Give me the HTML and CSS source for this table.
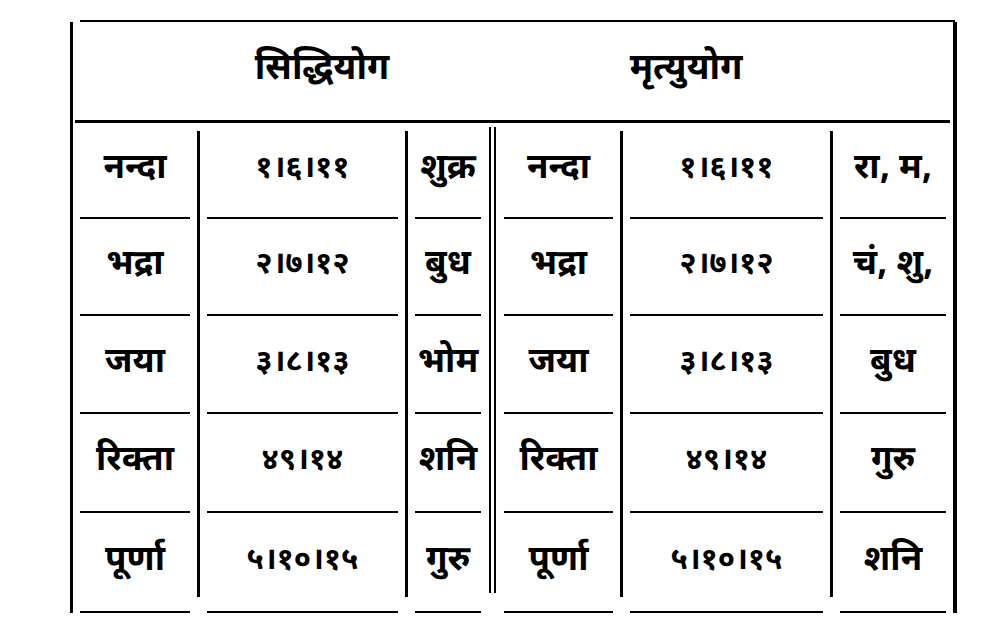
FILE: index.html
```html
<!DOCTYPE html>
<html lang="hi">
<head>
<meta charset="utf-8">
<link rel="stylesheet" href="styles.css">
</head>
<body>
<div class="page">
  <div class="top-rule"></div>
  <div class="frame">
    <div class="head">
      <div class="head-cell">सिद्धियोग</div>
      <div class="head-cell">मृत्युयोग</div>
    </div>
    <div class="grid">
      <div class="vline c2"></div>
      <div class="vline c4"></div>
      <div class="dline c6"></div>
      <div class="vline c8"></div>
      <div class="vline c10"></div>

      <div class="cell">नन्दा</div><div class="cell num">१।६।११</div><div class="cell">शुक्र</div>
      <div class="cell">नन्दा</div><div class="cell num">१।६।११</div><div class="cell">रा, म,</div>

      <div class="cell">भद्रा</div><div class="cell num">२।७।१२</div><div class="cell">बुध</div>
      <div class="cell">भद्रा</div><div class="cell num">२।७।१२</div><div class="cell">चं, शु,</div>

      <div class="cell">जया</div><div class="cell num">३।८।१३</div><div class="cell">भोम</div>
      <div class="cell">जया</div><div class="cell num">३।८।१३</div><div class="cell">बुध</div>

      <div class="cell">रिक्ता</div><div class="cell num">४९।१४</div><div class="cell">शनि</div>
      <div class="cell">रिक्ता</div><div class="cell num">४९।१४</div><div class="cell">गुरु</div>

      <div class="cell">पूर्णा</div><div class="cell num">५।१०।१५</div><div class="cell">गुरु</div>
      <div class="cell">पूर्णा</div><div class="cell num">५।१०।१५</div><div class="cell">शनि</div>
    </div>
  </div>
</div>
</body>
</html>
```
FILE: styles.css
```css
html, body {
  margin: 0;
  padding: 0;
  background: #fff;
}
body {
  width: 1000px;
  height: 636px;
  overflow: hidden;
  font-family: "Noto Sans Devanagari", "Lohit Devanagari", "Noto Sans", sans-serif;
  color: #000;
}
.page {
  padding-top: 20px;
  padding-left: 70px;
}
.top-rule {
  margin-left: 10px;
  width: 875px;
  height: 2px;
  background: #000;
}
.frame {
  width: 880px;
  border-left: 3px solid #000;
  border-right: 4px solid #000;
}
.head {
  height: 98px;
  display: grid;
  grid-template-columns: 498px 230px 1fr;
  align-items: center;
  background: linear-gradient(#000, #000) 2px 100% / 875px 3px no-repeat;
  padding-bottom: 3px;
}
.head-cell {
  text-align: center;
  font-size: 36px;
  font-weight: 700;
  line-height: 1;
}
.grid {
  display: grid;
  grid-template-columns: 124px 3px 205px 3px 80px 9px 123px 3px 207px 3px 1fr;
  grid-template-rows: 96px 97px 98px 99px 100px;
}
.vline {
  grid-row: 1 / span 5;
  background: #000;
  margin: 8px 0 16px;
}
.dline {
  grid-row: 1 / span 5;
  border-left: 2px solid #000;
  border-right: 2px solid #000;
  margin: 4px 1px 20px;
}
.c2 { grid-column: 2; }
.c4 { grid-column: 4; }
.c6 { grid-column: 6; }
.c8 { grid-column: 8; }
.c10 { grid-column: 10; }
.cell {
  display: flex;
  align-items: center;
  justify-content: center;
  font-size: 35px;
  font-weight: 700;
  line-height: 1;
  padding-bottom: 4px;
  background: linear-gradient(#000, #000) 50% 100% / calc(100% - 14px) 2px no-repeat;
}
.cell.num {
  font-size: 31px;
}
```
